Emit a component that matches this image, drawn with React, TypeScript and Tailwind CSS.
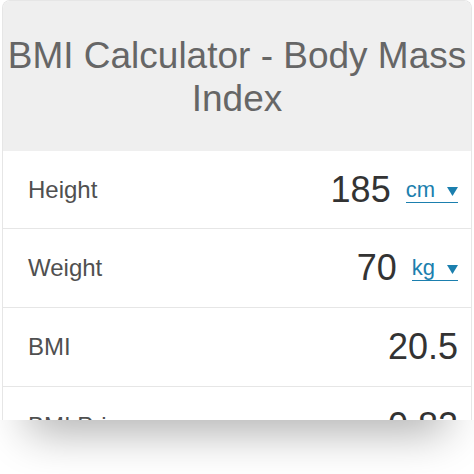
import React from "react";

function Arrow() {
  return (
    <svg width="11" height="9" viewBox="0 0 11 9" className="ml-[12px] mt-[8px]">
      <polygon points="0,0 11,0 5.5,9" fill="#1b7fae" />
    </svg>
  );
}

function Unit({ unit }: { unit: string }) {
  return (
    <span className="flex items-start border-b-[1.5px] border-[#1b7fae] text-[#1b7fae] text-[22px] leading-[22px] pb-[1px] mt-[2px]">
      <span>{unit}</span>
      <Arrow />
    </span>
  );
}

function Row({ label, value, unit, h = "h-[79px]" }: { label: string; value: string; unit?: string; h?: string }) {
  return (
    <div className={`${h} border-b border-[#e6e6e6] flex items-center justify-between pl-[25px] pr-[13px]`}>
      <span className="text-[24px] text-[#505050] leading-none">{label}</span>
      <div className="flex items-center gap-[15px]">
        <span className="text-[36px] text-[#333] leading-none">{value}</span>
        {unit && <Unit unit={unit} />}
      </div>
    </div>
  );
}

export default function App() {
  return (
    <div className="w-[474px] h-[474px] bg-white relative overflow-hidden font-['Liberation_Sans',Arial,sans-serif]">
      <div className="mx-[2px] h-[474px] border-x border-t border-[#e6e6e6] rounded-t-[8px] overflow-hidden bg-white">
        <div className="h-[150px] bg-[#efefef] flex items-center justify-center text-center text-[37px] leading-[43px] text-[#666] pt-[2px]">
          BMI Calculator - Body Mass Index
        </div>
        <Row label="Height" value="185" unit="cm" h="h-[78px]" />
        <Row label="Weight" value="70" unit="kg" />
        <Row label="BMI" value="20.5" />
        <Row label="BMI Prime" value="0.82" />
      </div>
      <div className="absolute top-[420px] left-0 right-0 bottom-0 bg-white overflow-hidden">
        <div className="absolute -top-[30px] left-[40px] right-[40px] h-[30px] bg-[#999] shadow-[0_0_45px_12px_rgba(0,0,0,0.32)]" />
      </div>
    </div>
  );
}
